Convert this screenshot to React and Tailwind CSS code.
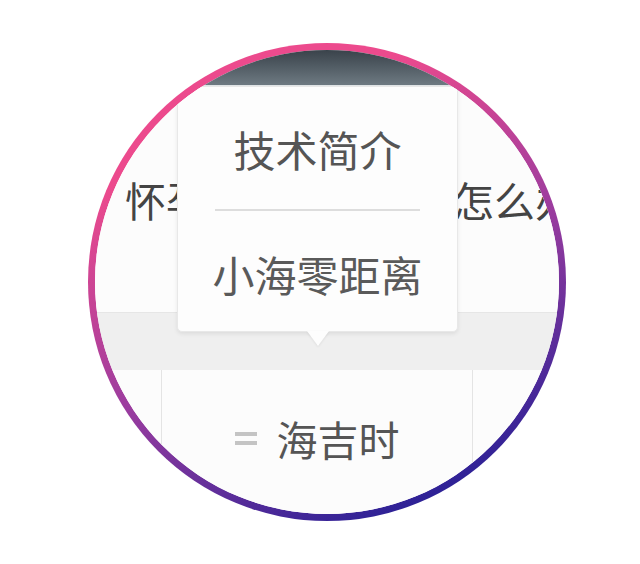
import React from 'react';

export default function App() {
  const font = { fontFamily: '"Noto Sans CJK SC", "Noto Sans", sans-serif' };
  return (
    <div className="w-[640px] h-[564px] bg-white overflow-hidden" style={font}>
      {/* magnifier circle with gradient ring */}
      <div className="ml-[88px] mt-[43px] w-[478px] h-[478px] rounded-full p-[7px] bg-[linear-gradient(155deg,#ec4a8d_22%,#9a3c9f_55%,#2c2196_88%)]">
        <div className="relative w-full h-full rounded-full overflow-hidden bg-white flex flex-col">
          {/* top bar */}
          <div className="h-[35px] shrink-0 bg-gradient-to-b from-[#3a434b] to-[#6e7a82]" />
          <div className="h-[2px] shrink-0 bg-[#e2e6e8]" />

          {/* article text row */}
          <div className="h-[225px] shrink-0 bg-[#fcfcfc] pt-[90px]">
            <p className="ml-[30px] whitespace-nowrap text-[41px] leading-[44px] text-[#444444]">
              怀孕期间肚子疼痛怎么办
            </p>
          </div>

          {/* gray strip */}
          <div className="h-[58px] shrink-0 bg-[#efefef] border-t border-[#e6e6e6]" />

          {/* bottom tabs */}
          <div className="flex-1 flex bg-[#fcfcfc]">
            <div className="w-[67px] border-r border-[#e4e4e4]" />
            <div className="w-[311px] flex justify-center pt-[46px] border-r border-[#e4e4e4]">
              <div className="flex items-center gap-[20px] h-[44px]">
                <span className="flex flex-col gap-[5px]">
                  <span className="block w-[22px] h-[4px] bg-[#c4c4c4]" />
                  <span className="block w-[22px] h-[4px] bg-[#c4c4c4]" />
                </span>
                <span className="text-[41px] leading-[44px] text-[#555555]">海吉时</span>
              </div>
            </div>
            <div className="flex-1" />
          </div>

          {/* popup menu */}
          <div className="absolute left-[82px] top-[36px] w-[281px] h-[246px] bg-[#fdfdfd] rounded-b-[5px] border border-[#e8e8e8] shadow-[0_2px_4px_rgba(0,0,0,0.08)] flex flex-col">
            <div className="h-[122px] flex items-center justify-center text-[42px] leading-none text-[#555555] pt-[2px]">
              技术简介
            </div>
            <div className="mx-[37px] h-[2px] bg-[#dddddd]" />
            <div className="flex-1 flex items-center justify-center text-[42px] leading-none text-[#5a5a5a] pt-[6px]">
              小海零距离
            </div>
            <div className="absolute left-1/2 -translate-x-1/2 -bottom-[15px] w-0 h-0 border-l-[11px] border-r-[11px] border-t-[15px] border-l-transparent border-r-transparent border-t-[#fdfdfd] drop-shadow-[0_1px_1px_rgba(0,0,0,0.08)]" />
          </div>
        </div>
      </div>
    </div>
  );
}
